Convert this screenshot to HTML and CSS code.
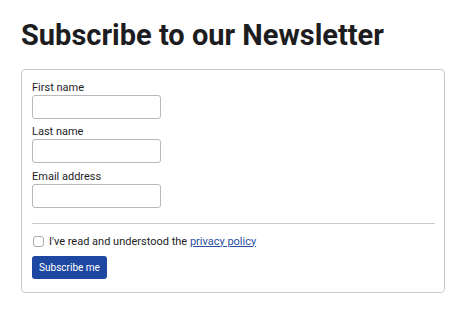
FILE: index.html
```html
<!DOCTYPE html>
<html lang="en">
<head>
<meta charset="utf-8">
<title>Newsletter</title>
<link rel="stylesheet" href="styles.css">
</head>
<body>
<h1 class="title">Subscribe to our Newsletter</h1>
<form class="card">
  <div class="field">
    <label class="label" for="fn">First name</label>
    <input class="input" id="fn" type="text">
  </div>
  <div class="field">
    <label class="label" for="ln">Last name</label>
    <input class="input" id="ln" type="text">
  </div>
  <div class="field">
    <label class="label" for="em">Email address</label>
    <input class="input" id="em" type="email">
  </div>
  <hr class="divider">
  <label class="check">
    <input class="box" type="checkbox">
    <span>I've read and understood the <a class="link" href="#">privacy policy</a></span>
  </label>
  <button class="btn" type="button">Subscribe me</button>
</form>
</body>
</html>
```
FILE: styles.css
```css
* { box-sizing: border-box; }
body {
  margin: 0;
  padding: 0 21px;
  font-family: Roboto, "Liberation Sans", sans-serif;
  color: #222;
  background: #fff;
}
.title {
  margin: 17px 0 0;
  font-size: 29px;
  line-height: 36px;
  font-weight: 700;
  color: #1d1d1f;
}
.card {
  width: 424px;
  margin-top: 16px;
  border: 1px solid #c9c9cd;
  border-radius: 4px;
  padding: 9.5px 9px 13px 10px;
  display: flex;
  flex-direction: column;
}
.field {
  display: flex;
  flex-direction: column;
  margin-bottom: 5.5px;
}
.label {
  font-size: 11px;
  line-height: 15px;
  color: #1d1d1f;
}
.input {
  width: 129px;
  height: 24px;
  border: 1px solid #b8b8bd;
  border-radius: 3px;
  margin: 0;
  padding: 2px 6px;
  font: inherit;
  background: #fff;
}
.divider {
  border: 0;
  border-top: 1px solid #c9c9cd;
  margin: 9.5px 0 10px;
  width: 100%;
}
.check {
  display: flex;
  align-items: center;
  gap: 5px;
  font-size: 11px;
  line-height: 15px;
  color: #1d1d1f;
}
.box {
  appearance: none;
  -webkit-appearance: none;
  margin: 0 0 0 1px;
  width: 11px;
  height: 11px;
  border: 1px solid #a9a9ae;
  border-radius: 3px;
  background: #fff;
}
.link {
  color: #2a4f9f;
}
.btn {
  align-self: flex-start;
  margin-top: 7.5px;
  width: 75px;
  height: 23px;
  background: #1d47a1;
  color: #fff;
  border: 0;
  border-radius: 3px;
  font-family: inherit;
  font-size: 10px;
  padding: 0;
}
```
